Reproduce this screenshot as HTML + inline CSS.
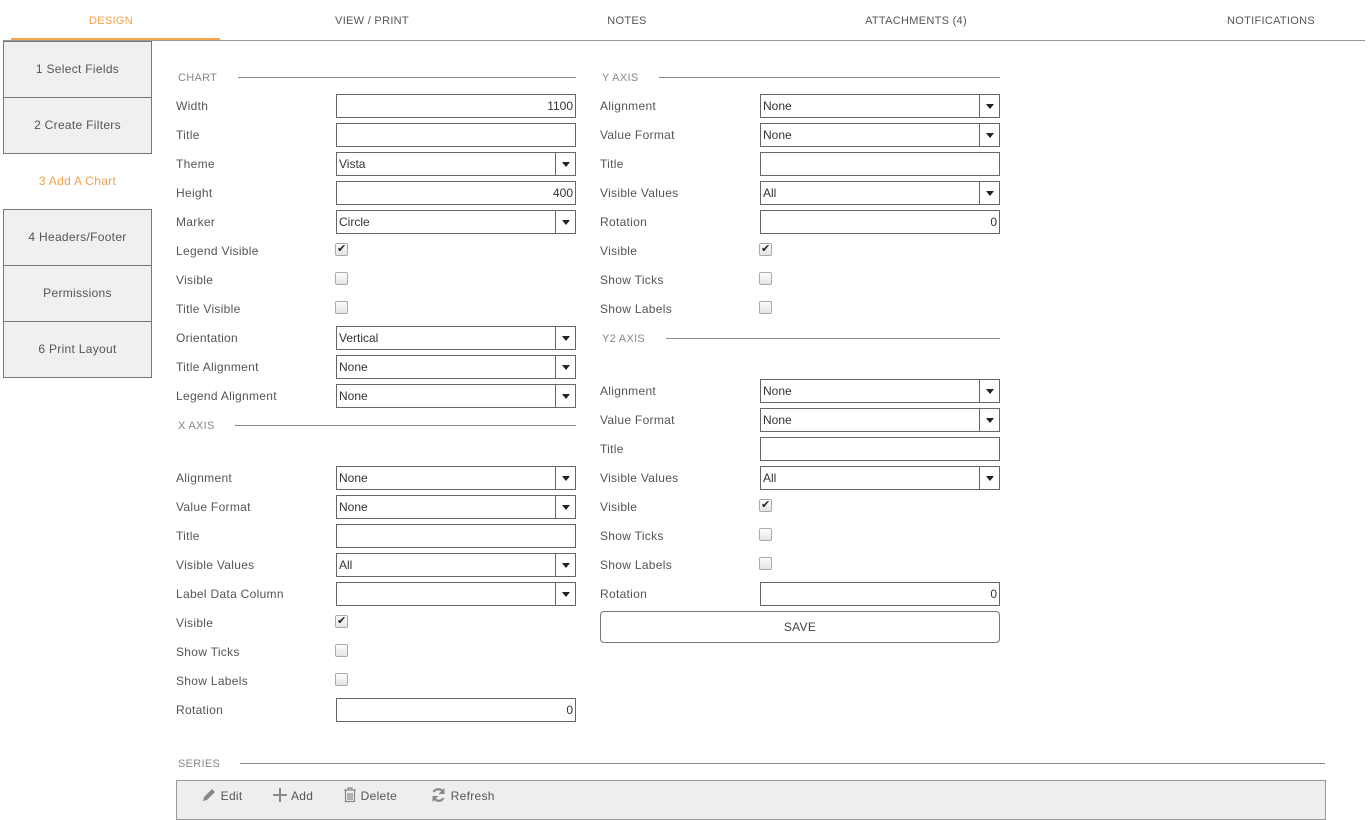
<!DOCTYPE html>
<html><head><meta charset="utf-8"><style>
*{box-sizing:border-box;margin:0;padding:0}
body{width:1368px;height:813px;background:#fff;font-family:"Liberation Sans",sans-serif;font-size:12px;color:#555;position:relative;overflow:hidden;letter-spacing:0.3px}
.a{position:absolute}
.tab{position:absolute;top:15px;font-size:11px;color:#555;text-transform:uppercase;transform:translateX(-50%);white-space:nowrap}
.side{position:absolute;left:3px;width:149px;height:57px;background:#f0f0f0;border:1px solid #777;text-align:center;line-height:55px;font-size:12px;color:#555}
.lbl{position:absolute;font-size:12px;color:#555;line-height:14px}
.in{position:absolute;width:240px;height:24px;border:1px solid #666;background:#fff;font-size:12px;line-height:22px;padding:0 2px;color:#333;letter-spacing:0}
.in.r{text-align:right}
.sel::after{content:"";position:absolute;right:0;top:0;width:19px;height:22px;border-left:1px solid #666}
.sel::before{content:"";position:absolute;right:5px;top:9px;border-left:4px solid transparent;border-right:4px solid transparent;border-top:5px solid #222}
.cb{position:absolute;width:13px;height:13px;border:1px solid #aaa;border-radius:2px;background:linear-gradient(#fdfdfd,#e4e4e4)}
.cb.on::after{content:"✔";position:absolute;left:1px;top:-2px;font-size:11px;color:#222}
.sec{position:absolute;font-size:11px;color:#888;text-transform:uppercase}
.hr{position:absolute;height:1px;background:#888}
</style></head><body>
<div class="tab" style="left:111px;color:#f5a04a">Design</div>
<div class="a" style="left:11px;top:38px;width:209px;height:3px;background:#f5a94a"></div>
<div class="tab" style="left:372px">View / Print</div>
<div class="tab" style="left:627px">Notes</div>
<div class="tab" style="left:916px">Attachments (4)</div>
<div class="tab" style="left:1271px">Notifications</div>
<div class="hr" style="left:3px;top:40px;width:1362px;background:#999"></div>

<div class="side" style="top:41px">1 Select Fields</div>
<div class="side" style="top:97px">2 Create Filters</div>
<div class="a" style="left:3px;top:153px;width:149px;height:57px;text-align:center;line-height:57px;color:#f5a04a">3 Add A Chart</div>
<div class="side" style="top:209px">4 Headers/Footer</div>
<div class="side" style="top:265px">Permissions</div>
<div class="side" style="top:321px">6 Print Layout</div>

<div class="sec" style="left:178px;top:72px">Chart</div><div class="hr" style="left:238px;top:77px;width:338px"></div>
<div class="sec" style="left:602px;top:72px">Y Axis</div><div class="hr" style="left:659px;top:77px;width:341px"></div>
<div class="sec" style="left:178px;top:420px">X Axis</div><div class="hr" style="left:235px;top:425px;width:341px"></div>
<div class="sec" style="left:602px;top:333px">Y2 Axis</div><div class="hr" style="left:666px;top:338px;width:334px"></div>

<div class="lbl" style="left:176px;top:99px">Width</div><div class="in r" style="left:336px;top:94px">1100</div>
<div class="lbl" style="left:176px;top:128px">Title</div><div class="in" style="left:336px;top:123px"></div>
<div class="lbl" style="left:176px;top:157px">Theme</div><div class="in sel" style="left:336px;top:152px">Vista</div>
<div class="lbl" style="left:176px;top:186px">Height</div><div class="in r" style="left:336px;top:181px">400</div>
<div class="lbl" style="left:176px;top:215px">Marker</div><div class="in sel" style="left:336px;top:210px">Circle</div>
<div class="lbl" style="left:176px;top:244px">Legend Visible</div><div class="cb on" style="left:335px;top:243px"></div>
<div class="lbl" style="left:176px;top:273px">Visible</div><div class="cb" style="left:335px;top:272px"></div>
<div class="lbl" style="left:176px;top:302px">Title Visible</div><div class="cb" style="left:335px;top:301px"></div>
<div class="lbl" style="left:176px;top:331px">Orientation</div><div class="in sel" style="left:336px;top:326px">Vertical</div>
<div class="lbl" style="left:176px;top:360px">Title Alignment</div><div class="in sel" style="left:336px;top:355px">None</div>
<div class="lbl" style="left:176px;top:389px">Legend Alignment</div><div class="in sel" style="left:336px;top:384px">None</div>

<div class="lbl" style="left:176px;top:471px">Alignment</div><div class="in sel" style="left:336px;top:466px">None</div>
<div class="lbl" style="left:176px;top:500px">Value Format</div><div class="in sel" style="left:336px;top:495px">None</div>
<div class="lbl" style="left:176px;top:529px">Title</div><div class="in" style="left:336px;top:524px"></div>
<div class="lbl" style="left:176px;top:558px">Visible Values</div><div class="in sel" style="left:336px;top:553px">All</div>
<div class="lbl" style="left:176px;top:587px">Label Data Column</div><div class="in sel" style="left:336px;top:582px"></div>
<div class="lbl" style="left:176px;top:616px">Visible</div><div class="cb on" style="left:335px;top:615px"></div>
<div class="lbl" style="left:176px;top:645px">Show Ticks</div><div class="cb" style="left:335px;top:644px"></div>
<div class="lbl" style="left:176px;top:674px">Show Labels</div><div class="cb" style="left:335px;top:673px"></div>
<div class="lbl" style="left:176px;top:703px">Rotation</div><div class="in r" style="left:336px;top:698px">0</div>

<div class="lbl" style="left:600px;top:99px">Alignment</div><div class="in sel" style="left:760px;top:94px">None</div>
<div class="lbl" style="left:600px;top:128px">Value Format</div><div class="in sel" style="left:760px;top:123px">None</div>
<div class="lbl" style="left:600px;top:157px">Title</div><div class="in" style="left:760px;top:152px"></div>
<div class="lbl" style="left:600px;top:186px">Visible Values</div><div class="in sel" style="left:760px;top:181px">All</div>
<div class="lbl" style="left:600px;top:215px">Rotation</div><div class="in r" style="left:760px;top:210px">0</div>
<div class="lbl" style="left:600px;top:244px">Visible</div><div class="cb on" style="left:759px;top:243px"></div>
<div class="lbl" style="left:600px;top:273px">Show Ticks</div><div class="cb" style="left:759px;top:272px"></div>
<div class="lbl" style="left:600px;top:302px">Show Labels</div><div class="cb" style="left:759px;top:301px"></div>

<div class="lbl" style="left:600px;top:384px">Alignment</div><div class="in sel" style="left:760px;top:379px">None</div>
<div class="lbl" style="left:600px;top:413px">Value Format</div><div class="in sel" style="left:760px;top:408px">None</div>
<div class="lbl" style="left:600px;top:442px">Title</div><div class="in" style="left:760px;top:437px"></div>
<div class="lbl" style="left:600px;top:471px">Visible Values</div><div class="in sel" style="left:760px;top:466px">All</div>
<div class="lbl" style="left:600px;top:500px">Visible</div><div class="cb on" style="left:759px;top:499px"></div>
<div class="lbl" style="left:600px;top:529px">Show Ticks</div><div class="cb" style="left:759px;top:528px"></div>
<div class="lbl" style="left:600px;top:558px">Show Labels</div><div class="cb" style="left:759px;top:557px"></div>
<div class="lbl" style="left:600px;top:587px">Rotation</div><div class="in r" style="left:760px;top:582px">0</div>
<div class="a" style="left:600px;top:611px;width:400px;height:32px;border:1px solid #777;border-radius:4px;text-align:center;line-height:30px;color:#444">SAVE</div>

<div class="sec" style="left:178px;top:758px">Series</div><div class="hr" style="left:240px;top:763px;width:1085px"></div>
<div class="a" style="left:176px;top:780px;width:1150px;height:40px;background:#eee;border:1px solid #999"></div>
<div class="a" style="left:201px;top:787px;font-size:12px;color:#555;white-space:nowrap"><svg width="16" height="16" viewBox="0 0 16 16" style="vertical-align:-3px"><path d="M2 14l1-4 8-8 3 3-8 8z" fill="#888"/></svg> Edit</div>
<div class="a" style="left:272px;top:787px;color:#555;white-space:nowrap"><svg width="16" height="16" viewBox="0 0 16 16" style="vertical-align:-3px"><path d="M8 1v14M1 8h14" stroke="#888" stroke-width="2"/></svg> Add</div>
<div class="a" style="left:343px;top:787px;color:#555;white-space:nowrap"><svg width="14" height="16" viewBox="0 0 14 16" style="vertical-align:-3px"><path d="M1 3h12M5 3V1h4v2M2.5 3.5v11h9v-11M5 6v7M7 6v7M9 6v7" stroke="#888" fill="none" stroke-width="1.2"/></svg> Delete</div>
<div class="a" style="left:430px;top:787px;color:#555;white-space:nowrap"><svg width="17" height="16" viewBox="0 0 16 16" style="vertical-align:-3px"><path d="M13 6A5.5 5.5 0 0 0 3 5M3 10a5.5 5.5 0 0 0 10 1" stroke="#888" fill="none" stroke-width="2.2"/><path d="M14 1v6H8zM2 15V9h6z" fill="#888"/></svg> Refresh</div>
</body></html>
